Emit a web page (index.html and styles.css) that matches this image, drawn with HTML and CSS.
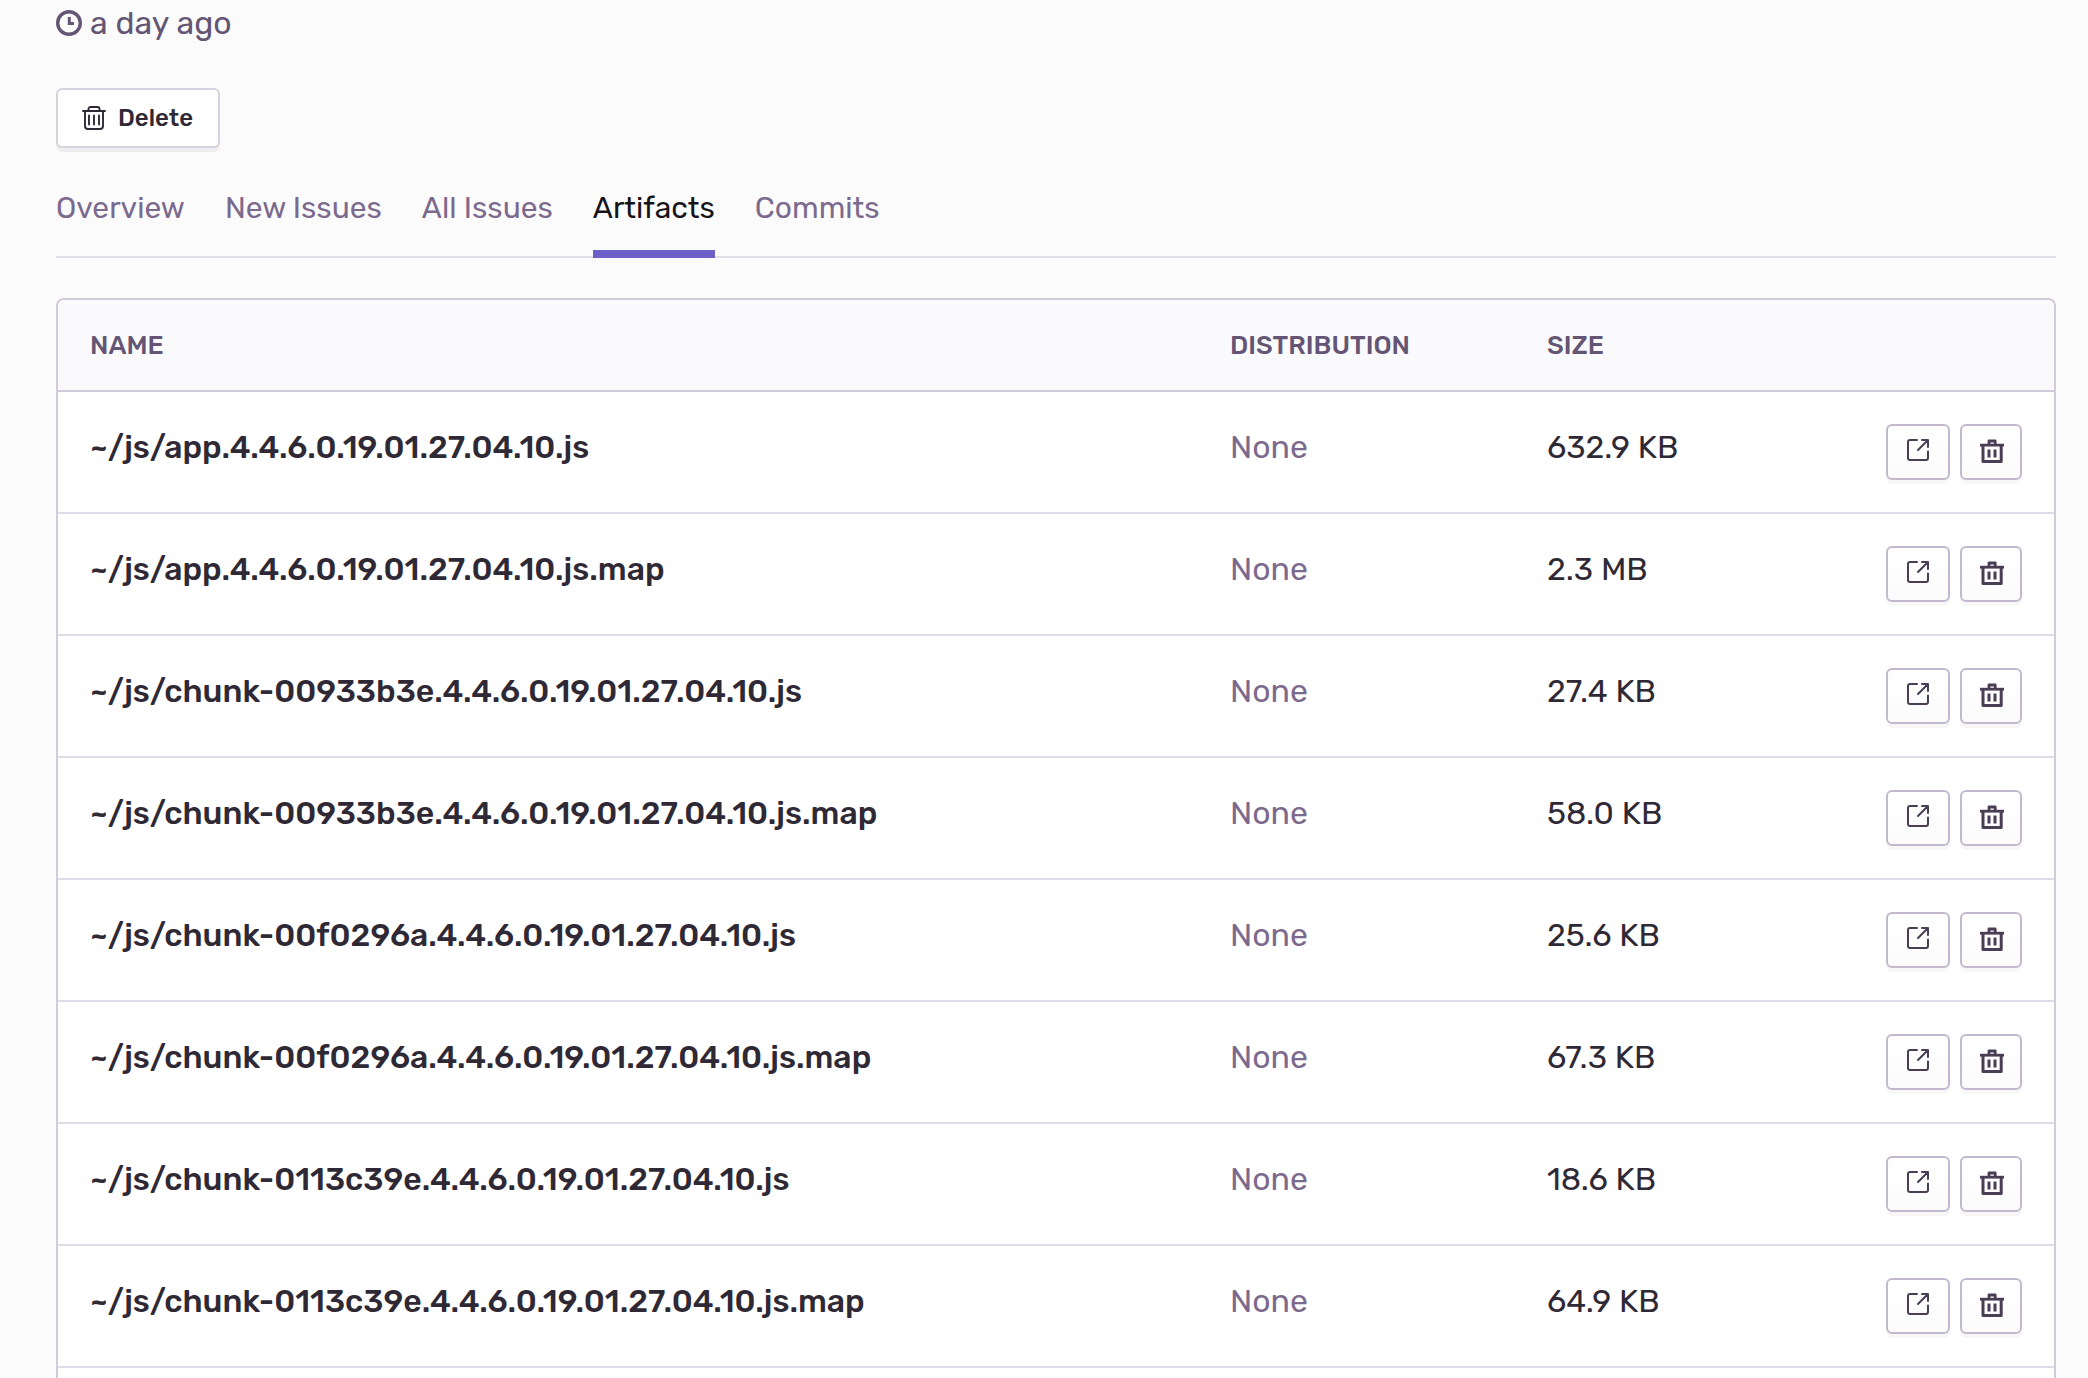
FILE: index.html
```html
<!DOCTYPE html>
<html lang="en">
<head>
<meta charset="utf-8">
<meta name="viewport" content="width=device-width, initial-scale=1">
<title>Release artifacts</title>
<link rel="stylesheet" href="styles.css">
</head>
<body>
<svg class="sprite" aria-hidden="true">
  <symbol id="icon-clock" viewBox="0 0 26 26">
    <circle cx="13" cy="13" r="11.3" fill="none" stroke="currentColor" stroke-width="3.4"/>
    <path d="M13.3 7v6.500H18" fill="none" stroke="currentColor" stroke-width="3"/>
  </symbol>
  <symbol id="icon-bin" viewBox="0 0 24 24">
    <path d="M1 5h22M6.500 4.500V3a2 2 0 0 1 2-2h7a2 2 0 0 1 2 2v1.500M3 5.500V20a3 3 0 0 0 3 3h12a3 3 0 0 0 3-3V5.500M7 9.500v9M12 9.500v9M17 9.500v9" fill="none" stroke="currentColor" stroke-width="1.900" stroke-linecap="round"/>
  </symbol>
  <symbol id="icon-open" viewBox="0 0 22 22">
    <path d="M10 1H3a2 2 0 0 0-2 2v16a2 2 0 0 0 2 2h16a2 2 0 0 0 2-2v-6.500M11 11l9.500-9.500M15 1h6v7" fill="none" stroke="currentColor" stroke-width="2" stroke-linecap="round" stroke-linejoin="round"/>
  </symbol>
  <symbol id="icon-trash" viewBox="0 0 24 24">
    <path d="M0 6.200h24" fill="none" stroke="currentColor" stroke-width="2.800"/>
    <path d="M3 6.500v16h18.200v-16" fill="none" stroke="currentColor" stroke-width="3" stroke-linejoin="round"/>
    <path d="M9 5.500V2h6.200v3.500" fill="none" stroke="currentColor" stroke-width="2.800" stroke-linejoin="round"/>
    <path d="M9 10.500v8M15 10.500v8" fill="none" stroke="currentColor" stroke-width="3"/>
  </symbol>
</svg>

<main class="page">
  <p class="released"><svg class="icon-clock" aria-hidden="true"><use href="#icon-clock"/></svg><time>a day ago</time></p>

  <button class="button" type="button"><svg class="icon" aria-hidden="true"><use href="#icon-bin"/></svg>Delete</button>

  <nav class="tabs" aria-label="Release">
    <a class="tab" href="#overview">Overview</a>
    <a class="tab" href="#new-issues">New Issues</a>
    <a class="tab" href="#all-issues">All Issues</a>
    <a class="tab tab-active" href="#artifacts" aria-current="page">Artifacts</a>
    <a class="tab" href="#commits">Commits</a>
  </nav>

  <section class="panel">
    <table class="artifacts">
      <colgroup><col><col class="col-dist"><col class="col-size"><col class="col-actions"></colgroup>
      <thead>
        <tr><th scope="col">Name</th><th scope="col">Distribution</th><th scope="col">Size</th><td></td></tr>
      </thead>
      <tbody>
        <tr><td class="name">~/js/app.4.4.6.0.19.01.27.04.10.js</td><td class="dist">None</td><td>632.9 KB</td><td><div class="actions"><a class="action action-open" href="#open" aria-label="Open artifact"><svg class="icon-open"><use href="#icon-open"/></svg></a><button class="action action-delete" type="button" aria-label="Delete artifact"><svg class="icon"><use href="#icon-trash"/></svg></button></div></td></tr>
        <tr><td class="name">~/js/app.4.4.6.0.19.01.27.04.10.js.map</td><td class="dist">None</td><td>2.3 MB</td><td><div class="actions"><a class="action action-open" href="#open" aria-label="Open artifact"><svg class="icon-open"><use href="#icon-open"/></svg></a><button class="action action-delete" type="button" aria-label="Delete artifact"><svg class="icon"><use href="#icon-trash"/></svg></button></div></td></tr>
        <tr><td class="name">~/js/chunk-00933b3e.4.4.6.0.19.01.27.04.10.js</td><td class="dist">None</td><td>27.4 KB</td><td><div class="actions"><a class="action action-open" href="#open" aria-label="Open artifact"><svg class="icon-open"><use href="#icon-open"/></svg></a><button class="action action-delete" type="button" aria-label="Delete artifact"><svg class="icon"><use href="#icon-trash"/></svg></button></div></td></tr>
        <tr><td class="name">~/js/chunk-00933b3e.4.4.6.0.19.01.27.04.10.js.map</td><td class="dist">None</td><td>58.0 KB</td><td><div class="actions"><a class="action action-open" href="#open" aria-label="Open artifact"><svg class="icon-open"><use href="#icon-open"/></svg></a><button class="action action-delete" type="button" aria-label="Delete artifact"><svg class="icon"><use href="#icon-trash"/></svg></button></div></td></tr>
        <tr><td class="name">~/js/chunk-00f0296a.4.4.6.0.19.01.27.04.10.js</td><td class="dist">None</td><td>25.6 KB</td><td><div class="actions"><a class="action action-open" href="#open" aria-label="Open artifact"><svg class="icon-open"><use href="#icon-open"/></svg></a><button class="action action-delete" type="button" aria-label="Delete artifact"><svg class="icon"><use href="#icon-trash"/></svg></button></div></td></tr>
        <tr><td class="name">~/js/chunk-00f0296a.4.4.6.0.19.01.27.04.10.js.map</td><td class="dist">None</td><td>67.3 KB</td><td><div class="actions"><a class="action action-open" href="#open" aria-label="Open artifact"><svg class="icon-open"><use href="#icon-open"/></svg></a><button class="action action-delete" type="button" aria-label="Delete artifact"><svg class="icon"><use href="#icon-trash"/></svg></button></div></td></tr>
        <tr><td class="name">~/js/chunk-0113c39e.4.4.6.0.19.01.27.04.10.js</td><td class="dist">None</td><td>18.6 KB</td><td><div class="actions"><a class="action action-open" href="#open" aria-label="Open artifact"><svg class="icon-open"><use href="#icon-open"/></svg></a><button class="action action-delete" type="button" aria-label="Delete artifact"><svg class="icon"><use href="#icon-trash"/></svg></button></div></td></tr>
        <tr><td class="name">~/js/chunk-0113c39e.4.4.6.0.19.01.27.04.10.js.map</td><td class="dist">None</td><td>64.9 KB</td><td><div class="actions"><a class="action action-open" href="#open" aria-label="Open artifact"><svg class="icon-open"><use href="#icon-open"/></svg></a><button class="action action-delete" type="button" aria-label="Delete artifact"><svg class="icon"><use href="#icon-trash"/></svg></button></div></td></tr>
      </tbody>
    </table>
  </section>
</main>
</body>
</html>
```
FILE: styles.css
```css
* {
  box-sizing: border-box;
}

body {
  margin: 0;
  background: #fbfbfc;
  color: #2f2936;
  font-family: Rubik, Roboto, sans-serif;
  font-size: 32px;
  line-height: 46px;
}

svg {
  display: block;
  flex: none;
}

.sprite {
  position: absolute;
  width: 0;
  height: 0;
}

.page {
  display: flex;
  flex-direction: column;
  min-height: 100vh;
  padding: 0 32px 0 56px;
}

.released {
  display: flex;
  align-items: center;
  gap: 8px;
  margin: 0 0 42px;
  color: #645574;
}

.icon-clock {
  width: 26px;
  height: 26px;
}

.icon {
  width: 24px;
  height: 24px;
}

.icon-open {
  width: 22px;
  height: 22px;
}

.button {
  display: flex;
  align-items: center;
  align-self: flex-start;
  gap: 12px;
  height: 60px;
  padding: 0 25px 0 24px;
  border: 2px solid #d8d2de;
  border-radius: 6px;
  background: #fff;
  box-shadow: 0 4px 0 rgba(0, 0, 0, 0.05);
  color: #2f2936;
  font: 500 24px/32px Rubik, Roboto, sans-serif;
}

.tabs {
  display: flex;
  gap: 40px;
  height: 70px;
  margin: 40px 0;
  border-bottom: 2px solid #e0dfe6;
}

.tab {
  height: 70px;
  color: #7c6a8e;
  font-size: 30px;
  line-height: 40px;
  text-decoration: none;
}

.tab-active {
  border-bottom: 8px solid #6c5fc7;
  color: #161319;
}

.panel {
  flex: 1;
  border: 2px solid #d1cad8;
  border-bottom: 0;
  border-radius: 8px 8px 0 0;
  background: #fff;
  overflow: hidden;
}

.artifacts {
  width: 100%;
  border-collapse: separate;
  border-spacing: 0;
  table-layout: fixed;
}

.col-dist {
  width: 317px;
}

.col-size {
  width: 317px;
}

.col-actions {
  width: 190px;
}

.artifacts thead th,
.artifacts thead td {
  height: 92px;
  padding: 2px 0 0;
  border-bottom: 2px solid #d1cad8;
  background: #fafafc;
  color: #645574;
  font-size: 26px;
  font-weight: 500;
  line-height: 32px;
  text-align: left;
  text-transform: uppercase;
}

.artifacts tbody td {
  padding: 32px 0;
  border-bottom: 2px solid #e2dbe8;
  vertical-align: top;
}

.artifacts tr > :first-child {
  padding-left: 32px;
}

.artifacts tr > :last-child {
  padding-right: 32px;
}

.artifacts .name {
  font-weight: 500;
}

.artifacts .dist {
  color: #7c6a8e;
}

.actions {
  display: flex;
  justify-content: flex-end;
  gap: 10px;
}

.action {
  display: flex;
  align-items: center;
  justify-content: center;
  width: 62px;
  height: 56px;
  padding: 0;
  border: 2px solid #c3b9cf;
  border-radius: 6px;
  background: linear-gradient(#fff, #fbfbfb);
  box-shadow: 0 4px 0 rgba(0, 0, 0, 0.03);
  color: #493e54;
}

.action-open {
  width: 64px;
  padding-bottom: 4px;
}

.action-delete {
  padding: 0 0 2px 2px;
}
```
